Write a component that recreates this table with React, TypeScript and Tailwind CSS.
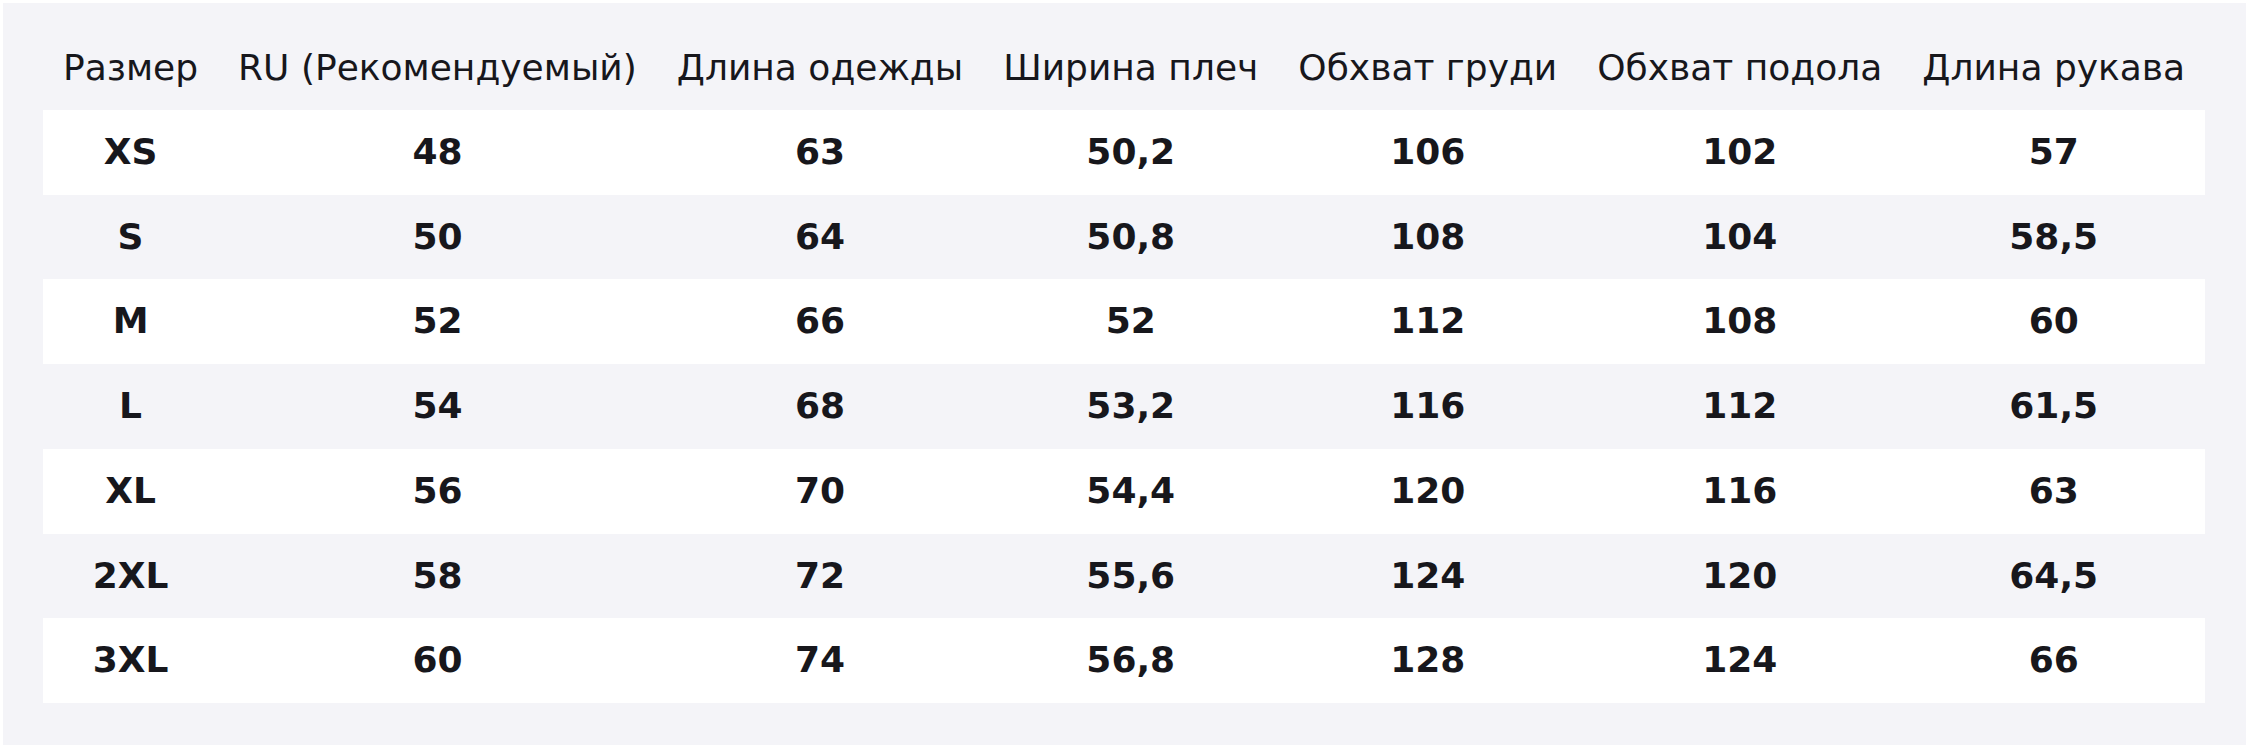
import React from 'react';

const headers = [
  'Размер',
  'RU (Рекомендуемый)',
  'Длина одежды',
  'Ширина плеч',
  'Обхват груди',
  'Обхват подола',
  'Длина рукава',
];

const rows: string[][] = [
  ['XS', '48', '63', '50,2', '106', '102', '57'],
  ['S', '50', '64', '50,8', '108', '104', '58,5'],
  ['M', '52', '66', '52', '112', '108', '60'],
  ['L', '54', '68', '53,2', '116', '112', '61,5'],
  ['XL', '56', '70', '54,4', '120', '116', '63'],
  ['2XL', '58', '72', '55,6', '124', '120', '64,5'],
  ['3XL', '60', '74', '56,8', '128', '124', '66'],
];

export default function App() {
  return (
    <div className="w-[2249px] h-[748px] bg-white p-[3px] font-['DejaVu_Sans',sans-serif] text-[#17171c]">
      <div className="h-full bg-[#f4f4f8] pt-[21px] px-[40px] pb-[42px]">
        <table className="border-collapse">
          <thead>
            <tr>
              {headers.map((h) => (
                <th
                  key={h}
                  className="px-[20px] pt-[23px] pb-[21px] text-[36px] font-normal leading-[42px] whitespace-nowrap text-center"
                >
                  {h}
                </th>
              ))}
            </tr>
          </thead>
          <tbody>
            {rows.map((r, i) => (
              <tr key={r[0]} className={i % 2 === 0 ? 'bg-white' : ''}>
                {r.map((c, j) => (
                  <td
                    key={j}
                    className="px-[20px] py-[22px] text-[36px] leading-[40.7px] font-bold text-center align-middle"
                  >
                    {c}
                  </td>
                ))}
              </tr>
            ))}
          </tbody>
        </table>
      </div>
    </div>
  );
}
